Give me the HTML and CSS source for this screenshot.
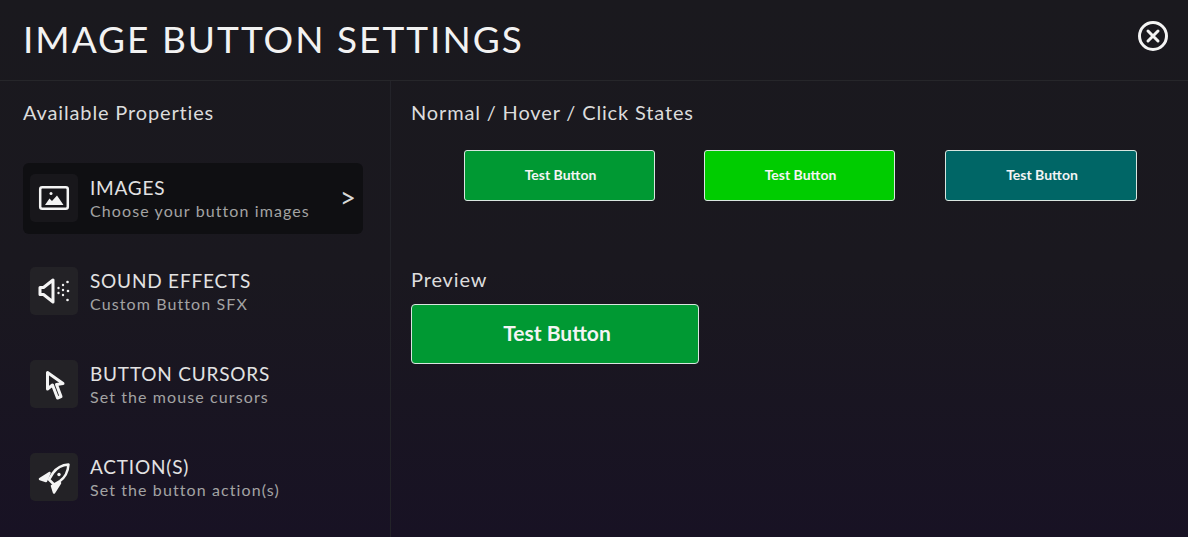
FILE: index.html
```html
<!DOCTYPE html>
<html lang="en">
<head>
    <meta charset="UTF-8">
    <title>Image Button Settings</title>
    <link rel="stylesheet" href="styles.css">
</head>
<body>
    <div class="dialog">
        <div class="header">
            <h1>IMAGE BUTTON SETTINGS</h1>
            <svg class="close" width="32" height="32" viewBox="0 0 32 32" fill="none" stroke="#f4f4f4" stroke-width="3" stroke-linecap="round">
                <circle cx="16" cy="16" r="13.5"/>
                <path d="M11 11L21 21M21 11L11 21"/>
            </svg>
        </div>
        <div class="content">
            <!-- Left column -->
            <div class="sidebar">
                <h2>Available Properties</h2>
                <div class="menu">
                    <div class="item selected">
                        <div class="icon">
                            <svg width="48" height="48" viewBox="0 0 48 48" fill="none" stroke="#f4f4f4" stroke-width="2.5">
                                <rect x="10.2" y="13.2" width="27.6" height="21.6" rx="2"/>
                                <circle cx="21" cy="19.5" r="1.5" fill="#f4f4f4" stroke="none"/>
                                <path d="M15 31L19.5 24.5L22 27L27 21.5L33.5 31Z" fill="#f4f4f4" stroke="none"/>
                            </svg>
                        </div>
                        <div class="text">
                            <div class="name">IMAGES</div>
                            <div class="desc">Choose your button images</div>
                        </div>
                        <span class="arrow">&gt;</span>
                    </div>
                    <div class="item">
                        <div class="icon">
                            <svg width="48" height="48" viewBox="0 0 48 48" fill="none" stroke="#f4f4f4" stroke-width="3" stroke-linejoin="round">
                                <path d="M10 20.5H13.5L23 13V35L13.5 27.5H10Z"/>
                                <g fill="#f4f4f4" stroke="none">
                                    <circle cx="37.5" cy="15" r="1.3"/>
                                    <circle cx="33" cy="18" r="1.2"/>
                                    <circle cx="28.5" cy="21" r="1.2"/>
                                    <circle cx="33" cy="23" r="1.2"/>
                                    <circle cx="38" cy="24" r="1.3"/>
                                    <circle cx="28.5" cy="26" r="1.2"/>
                                    <circle cx="33" cy="28" r="1.2"/>
                                    <circle cx="37.5" cy="33" r="1.3"/>
                                </g>
                            </svg>
                        </div>
                        <div class="text">
                            <div class="name">SOUND EFFECTS</div>
                            <div class="desc">Custom Button SFX</div>
                        </div>
                    </div>
                    <div class="item">
                        <div class="icon">
                            <svg width="48" height="48" viewBox="0 0 48 48" fill="none" stroke="#f4f4f4" stroke-width="3" stroke-linejoin="round">
                                <path d="M17.5 12.5V29L22.5 25L27.5 38L31 36.5L26.5 24.5L33 23.5Z"/>
                            </svg>
                        </div>
                        <div class="text">
                            <div class="name">BUTTON CURSORS</div>
                            <div class="desc">Set the mouse cursors</div>
                        </div>
                    </div>
                    <div class="item">
                        <div class="icon">
                            <svg width="48" height="48" viewBox="0 0 48 48" fill="none" stroke="#f4f4f4" stroke-width="2.5" stroke-linejoin="round">
                                <path d="M38.5 11.5C31.5 12 26.5 15 23 20L19 26.5L24 31.5L30 28C35.5 24 38 18.5 38.5 11.5Z"/>
                                <path d="M19.5 20L10 26L16 28ZM30 30L24 39.5L22 33Z" fill="#f4f4f4"/>
                                <circle cx="29" cy="21.5" r="1.7" fill="#f4f4f4" stroke="none"/>
                            </svg>
                        </div>
                        <div class="text">
                            <div class="name">ACTION(S)</div>
                            <div class="desc">Set the button action(s)</div>
                        </div>
                    </div>
                </div>
            </div>
            <!-- Right column -->
            <div class="main">
                <h2>Normal / Hover / Click States</h2>
                <div class="states">
                    <div class="button normal">Test Button</div>
                    <div class="button hover">Test Button</div>
                    <div class="button click">Test Button</div>
                </div>
                <h2 class="preview-title">Preview</h2>
                <div class="button preview">Test Button</div>
            </div>
        </div>
    </div>
</body>
</html>
```

FILE: styles.css
```css
html, body {
    height: 100%;
}

body {
    margin: 0;
    font-family: "Lato", sans-serif;
    background-color: #19161f;
    color: #f0f0f0;
    overflow: hidden;
}

.dialog {
    height: 537px;
    display: flex;
    flex-direction: column;
    background: linear-gradient(to bottom, #1a191e 0%, #1a181f 50%, #181224 100%);
}

.header {
    height: 81px;
    flex: none;
    box-sizing: border-box;
    border-bottom: 1px solid #26262a;
    padding: 0 19px 0 23px;
    display: flex;
    align-items: center;
    justify-content: space-between;
}

h1 {
    margin: 0 0 3px;
    font-size: 37px;
    font-weight: 400;
    letter-spacing: 2px;
    color: #f2f2f2;
}

.close {
    display: block;
    margin-bottom: 9px;
}

.content {
    flex: 1;
    display: flex;
}

.sidebar {
    width: 391px;
    flex: none;
    box-sizing: border-box;
    border-right: 1px solid #232329;
    padding: 19px 27px 0 23px;
}

h2 {
    margin: 0;
    height: 24px;
    line-height: 24px;
    font-size: 20px;
    font-weight: 400;
    letter-spacing: 0.85px;
    color: #dcdcdc;
}

.menu {
    margin-top: 39px;
    display: flex;
    flex-direction: column;
    gap: 22px;
}

.item {
    height: 71px;
    box-sizing: border-box;
    padding: 11px 7px 0;
    display: flex;
    align-items: flex-start;
    border-radius: 6px;
}

.item.selected {
    background-color: #0f0f12;
}

.icon {
    width: 48px;
    height: 48px;
    flex: none;
    border-radius: 5px;
    background-color: #232226;
}

.item.selected .icon {
    background-color: #18171b;
}

.icon svg {
    display: block;
}

.text {
    margin-left: 12px;
    padding-top: 2px;
    flex: 1;
}

.name {
    font-size: 19px;
    line-height: 24px;
    letter-spacing: 0.8px;
    color: #e2e2e2;
}

.desc {
    font-size: 16px;
    line-height: 22px;
    letter-spacing: 1.1px;
    color: #a3a3a3;
}

.arrow {
    font-size: 28px;
    line-height: 48px;
    margin-top: -1px;
    color: #d8d8d8;
}

.main {
    flex: 1;
    padding: 19px 0 0 20px;
}

.states {
    margin-top: 26px;
    padding-left: 53px;
    display: flex;
    gap: 49px;
}

.button {
    box-sizing: border-box;
    border: 1px solid #d9e6e0;
    border-radius: 3px;
    display: flex;
    align-items: center;
    justify-content: center;
    color: #f4f4f4;
    font-weight: 700;
}

.states .button {
    width: 191px;
    height: 51px;
    font-size: 14px;
    padding: 0 0 3px 2px;
}

.normal {
    background-color: #009933;
}

.hover {
    background-color: #00cc00;
}

.states .click {
    width: 192px;
    margin-left: 1px;
    background-color: #006666;
}

.preview-title {
    margin-top: 66px;
}

.preview {
    margin-top: 13px;
    width: 288px;
    height: 60px;
    background-color: #009933;
    font-size: 21px;
    border-width: 1.5px;
    border-radius: 4px;
    padding: 0 0 4px 4px;
}
```
